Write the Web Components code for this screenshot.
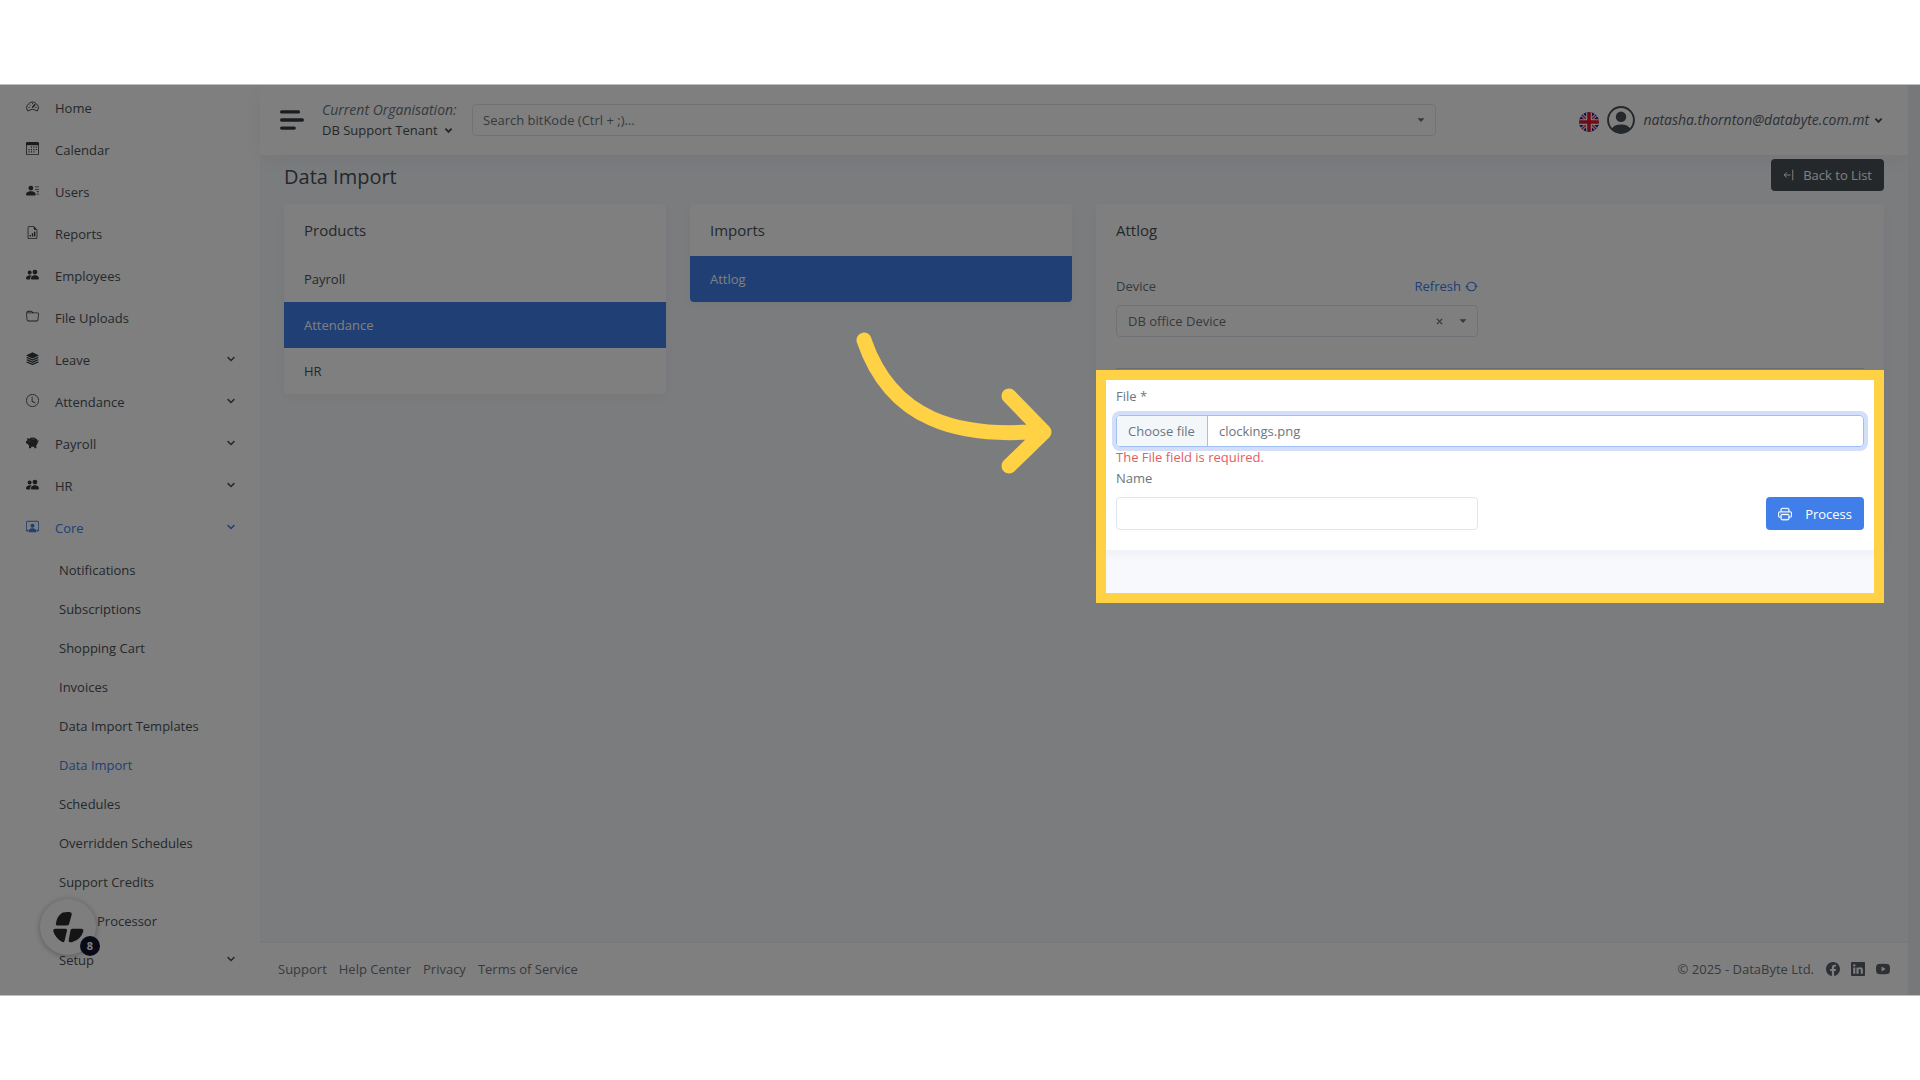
<!DOCTYPE html>
<html lang="en">
<head>
<meta charset="utf-8">
<title>Data Import</title>
<style>
  html, body { margin: 0; background: #fff; }
  body {
    font: 13px/20px "Open Sans", "Noto Sans", sans-serif;
    color: #495057;
    --blue: #407fea;
    --muted: #6c757d;
    --line: #dfe6ee;
    --canvas: #f7f9fd;
  }
</style>
</head>
<body>
<db-app></db-app>
<script>
const RESET = `
  *, *::before, *::after { box-sizing: border-box; }
  ul { list-style: none; margin: 0; padding: 0; }
  h1, h2, p { margin: 0; font-weight: 400; }
  a { color: inherit; text-decoration: none; }
  button, input, select { font: inherit; color: inherit; }
  button { background: none; border: 0; padding: 0; cursor: pointer; }
`;

const define = (name, css, html) => {
  customElements.define(name, class extends HTMLElement {
    connectedCallback() {
      if (this.shadowRoot) return;
      const root = this.attachShadow({ mode: 'open' });
      const body = typeof html === 'function' ? html(this) : html;
      root.innerHTML = `<style>${RESET}${css}</style>${body}`;
    }
  });
};

const ICONS = {
  dash: `<g fill="none" stroke="currentColor" stroke-width="1.1"><path d="M2.2 13.6A7 7 0 1 1 13.8 13.6Q11 11.6 8 11.6T2.2 13.6Z"/><path d="M7.6 9.6 11.4 5.2" stroke-width="1.7"/><path d="M8 3.6v1.6M3.2 9h1.6M11.4 9h1.6M4.6 5.6l1 1"/></g>`,
  calendar: `<path d="M1.5 0h13A1.5 1.5 0 0 1 16 1.500v13a1.500 1.500 0 0 1-1.500 1.500h-13A1.500 1.500 0 0 1 0 14.500v-13A1.500 1.500 0 0 1 1.500 0ZM1 4v10.500a.5.5 0 0 0 .5.5h13a.5.5 0 0 0 .5-.5V4Z" fill-rule="evenodd"/><path d="M6 5.500h1.400v1.500H6zM9 5.500h1.400v1.500H9zM12 5.500h1.400v1.500H12zM3 8.500h1.400V10H3zM6 8.500h1.400V10H6zM9 8.500h1.400V10H9zM12 8.500h1.400V10H12zM3 11.500h1.400V13H3zM6 11.500h1.400V13H6zM9 11.500h1.400V13H9z"/>`,
  users: `<path d="M6 8a3 3 0 1 0 0-6 3 3 0 0 0 0 6m-5 6s-1 0-1-1 1-4 6-4 6 3 6 4-1 1-1 1zM11 3.5a.5.5 0 0 1 .5-.5h4a.5.5 0 0 1 0 1h-4a.5.5 0 0 1-.5-.5m.5 2.5a.5.5 0 0 0 0 1h4a.5.5 0 0 0 0-1zm2 3a.5.5 0 0 0 0 1h2a.5.5 0 0 0 0-1zm0 3a.5.5 0 0 0 0 1h2a.5.5 0 0 0 0-1z"/>`,
  report: `<path d="M9.800 13V7h1.700v6zM7.200 13V9h1.600v4zM4.500 13v-2h1.600v2z"/><path d="M14 14V4.500L9.500 0H4a2 2 0 0 0-2 2v12a2 2 0 0 0 2 2h8a2 2 0 0 0 2-2M9.500 3A1.500 1.500 0 0 0 11 4.500h2V14a1 1 0 0 1-1 1H4a1 1 0 0 1-1-1V2a1 1 0 0 1 1-1h5.500z"/>`,
  people: `<path d="M7 14s-1 0-1-1 1-4 5-4 5 3 5 4-1 1-1 1zm4-6a3 3 0 1 0 0-6 3 3 0 0 0 0 6m-5.784 6A2.24 2.24 0 0 1 5 13c0-1.355.68-2.75 1.936-3.72A6.3 6.3 0 0 0 5 9c-4 0-5 3-5 4s1 1 1 1zM4.5 8a2.5 2.5 0 1 0 0-5 2.5 2.5 0 0 0 0 5"/>`,
  folder: `<path d="M.54 3.87.5 3a2 2 0 0 1 2-2h3.672a2 2 0 0 1 1.414.586l.828.828A2 2 0 0 0 9.828 3h3.982a2 2 0 0 1 1.992 2.181l-.637 7A2 2 0 0 1 13.174 14H2.826a2 2 0 0 1-1.991-1.819l-.637-7a2 2 0 0 1 .342-1.310zM2.190 4a1 1 0 0 0-.996 1.090l.637 7a1 1 0 0 0 .995.910h10.348a1 1 0 0 0 .995-.910l.637-7A1 1 0 0 0 13.810 4zm4.690-1.707A1 1 0 0 0 6.172 2H2.500a1 1 0 0 0-1 .981l.006.139q.323-.119.684-.120h5.396z"/>`,
  stack: `<path d="M8 .4 16 4.200 8 8 0 4.200Z"/><path d="M1.900 6 8 8.900 14.100 6 16 7 8 10.800 0 7ZM1.900 8.800 8 11.700 14.100 8.800 16 9.800 8 13.500 0 9.800ZM1.900 11.600 8 14.400 14.100 11.600 16 12.500 8 16.200 0 12.500Z"/>`,
  clock: `<path d="M8 3.500a.5.5 0 0 0-1 0V9a.5.5 0 0 0 .252.434l3.500 2a.5.5 0 0 0 .496-.868L8 8.710z"/><circle cx="8" cy="8" r="7.500" fill="none" stroke="currentColor"/>`,
  piggy: `<path d="M1.200 3.300C1.600 2.700 2.400 2.800 3 3.200L3.900 3.700C5 2.500 6.600 1.900 8.300 1.900c3 0 5.500 1.700 6.100 4.300.5-.2.800-.6.700-1.200.9.4 1 1.600-.5 2.100.1 1.700-.8 3.300-2.100 4.400l.4 2.900a.5.5 0 0 1-.5.6h-1.900l-.5-1.900q-1.700.3-3.400 0L6.100 15H4.200a.5.5 0 0 1-.5-.5l.1-2.700C2.900 11.100 2.300 10.200 2 9.500L.8 9.200A.9.9 0 0 1 0 8.300V6.700c0-.5.4-.8.8-.9L1.900 5.400Z"/><path d="M6.800 4q2-.6 3.800.200" fill="none" stroke="#999" stroke-width=".8"/><circle cx="4.500" cy="6.300" r=".7" fill="#999"/>`,
  work: `<path d="M4 15s-1 0-1-1 1-4 5-4 5 3 5 4-1 1-1 1zm4-5.500a2.500 2.500 0 1 0 0-5 2.500 2.500 0 0 0 0 5"/><path d="M2 1a2 2 0 0 0-2 2v9.500A1.500 1.500 0 0 0 1.500 14h.653a5.400 5.400 0 0 1 1.066-2H1V3a1 1 0 0 1 1-1h12a1 1 0 0 1 1 1v9h-2.219c.554.654.89 1.373 1.066 2h.653a1.500 1.500 0 0 0 1.500-1.500V3a2 2 0 0 0-2-2z"/>`,
  chevron: `<path d="M3.500 5.500 8 10l4.500-4.500" fill="none" stroke="currentColor" stroke-width="1.900"/>`,
  bold: `<path d="M2.500 4.500 8 10.500l5.500-6" fill="none" stroke="currentColor" stroke-width="3.400"/>`,
  caret: `<path d="M1 4.500h14L8 12Z"/>`,
  cross: `<path d="m2 2 12 12m0-12-12 12" fill="none" stroke="currentColor" stroke-width="3.200"/>`,
  back: `<path d="M13 1v14M10 8H1.500M5 4.500 1.500 8 5 11.500" fill="none" stroke="currentColor" stroke-width="1.300"/>`,
  printer: `<path d="M2.500 8a.5.5 0 1 0 0-1 .5.5 0 0 0 0 1"/><path d="M5 1a2 2 0 0 0-2 2v2H2a2 2 0 0 0-2 2v3a2 2 0 0 0 2 2h1v1a2 2 0 0 0 2 2h6a2 2 0 0 0 2-2v-1h1a2 2 0 0 0 2-2V7a2 2 0 0 0-2-2h-1V3a2 2 0 0 0-2-2zM4 3a1 1 0 0 1 1-1h6a1 1 0 0 1 1 1v2H4zm1 5a2 2 0 0 0-2 2v1H2a1 1 0 0 1-1-1V7a1 1 0 0 1 1-1h12a1 1 0 0 1 1 1v3a1 1 0 0 1-1 1h-1v-1a2 2 0 0 0-2-2zm7 2v3a1 1 0 0 1-1 1H5a1 1 0 0 1-1-1v-3a1 1 0 0 1 1-1h6a1 1 0 0 1 1 1" stroke="currentColor" stroke-width=".4"/>`,
  refresh: `<path d="M11.534 7h3.932a.25.25 0 0 1 .192.410l-1.966 2.360a.25.25 0 0 1-.384 0l-1.966-2.360a.25.25 0 0 1 .192-.410m-11 2h3.932a.25.25 0 0 0 .192-.410L2.692 6.230a.25.25 0 0 0-.384 0L.342 8.590A.25.25 0 0 0 .534 9"/><path d="M2.600 5.800A6.200 6.200 0 0 1 13.800 7M13.400 10.200A6.200 6.200 0 0 1 2.200 9" fill="none" stroke="currentColor" stroke-width="1.300"/>`,
  menu: `<g fill="none" stroke="currentColor" stroke-width="2.200" stroke-linecap="round"><path d="M1.100 2.600h11.200M1.100 8h13.800M1.100 13.400h8.400"/></g>`,
  facebook: `<path d="M16 8.049c0-4.446-3.582-8.050-8-8.050C3.580 0-.002 3.603-.002 8.050c0 4.017 2.926 7.347 6.750 7.951v-5.625h-2.030V8.050H6.750V6.275c0-2.017 1.195-3.131 3.022-3.131.876 0 1.791.157 1.791.157v1.980h-1.009c-.993 0-1.303.621-1.303 1.258v1.510h2.218l-.354 2.326H9.250V16c3.824-.604 6.750-3.934 6.750-7.951"/>`,
  linkedin: `<path d="M0 1.146C0 .513.526 0 1.175 0h13.650C15.474 0 16 .513 16 1.146v13.708c0 .633-.526 1.146-1.175 1.146H1.175C.526 16 0 15.487 0 14.854zm4.943 12.248V6.169H2.542v7.225zm-1.200-8.212c.837 0 1.358-.554 1.358-1.248-.015-.709-.520-1.248-1.342-1.248S2.400 3.226 2.400 3.934c0 .694.521 1.248 1.327 1.248zm4.908 8.212V9.359c0-.216.016-.432.080-.586.173-.431.568-.878 1.232-.878.869 0 1.216.662 1.216 1.634v3.865h2.401V9.250c0-2.220-1.184-3.252-2.764-3.252-1.274 0-1.845.7-2.165 1.193v.025h-.016l.016-.025V6.169h-2.400c.030.678 0 7.225 0 7.225z"/>`,
  youtube: `<path fill-rule="evenodd" d="M3 2.300Q8 1.800 13 2.300 15.300 2.500 15.700 4.700 16.200 8 15.700 11.300 15.300 13.500 13 13.700 8 14.200 3 13.700.7 13.500.3 11.300-.2 8 .3 4.700.7 2.500 3 2.300ZM6.400 5.200v5.600L11 8Z"/>`,
  avatar: `<circle cx="8" cy="8" r="7.400" fill="none" stroke="currentColor" stroke-width="1.100"/><circle cx="8" cy="6.200" r="3"/><path d="M2.700 13Q4 10.500 8 10.500t5.300 2.500A7.300 7.300 0 0 1 2.700 13Z"/>`,
  flag: `<clipPath id="c"><circle cx="8" cy="8" r="8"/></clipPath><g clip-path="url(#c)"><path fill="#12239a" d="M0 0h16v16H0z"/><path d="m0 0 16 16M16 0 0 16" stroke="#fff" stroke-width="2.600"/><path d="m0 0 16 16M16 0 0 16" stroke="#e0142f" stroke-width="1"/><path d="M8 0v16M0 8h16" stroke="#fff" stroke-width="4.600"/><path d="M8 0v16M0 8h16" stroke="#e0142f" stroke-width="2.800"/></g>`,
  brand: `<path d="M5 .3Q8-.2 9 .1 9.900.4 9.600 1.500L8.300 6.200Q8 7 7 7H2.300Q1.300 7 1.500 6 2 2 5 .3ZM1.200 8.700H6.400Q7.500 8.700 7.200 9.700L6 14.800Q5.600 16 4.600 15.400 1 13 .2 10-.1 8.700 1.200 8.700ZM10 8.700H14.600Q16 8.700 15.600 10 14.500 14 10 15.500 7.900 16 8.100 14.600L9 9.600Q9.200 8.700 10 8.700Z"/>`
};

define('db-icon', `
  :host { display: inline-flex; flex: none; width: 13px; height: 13px; }
  svg { display: block; width: 100%; height: 100%; fill: currentColor; }
`, host => `<svg viewBox="0 0 16 16" aria-hidden="true">${ICONS[host.getAttribute('name')]}</svg>`);

define('nav-item', `
  :host { display: block; }
  a { display: flex; align-items: center; height: 42px; padding: 0 26px; }
  .label { flex: 1; padding-left: 16px; }
  :host([sub]) a { height: 39px; padding-left: 59px; }
  :host([sub]) .label { padding-left: 0; }
  :host([inset]) .label { padding-left: 38px; }
  :host([active]) a { color: var(--blue); }
  .icon { color: #343a40; margin-bottom: 3px; }
  :host([active]) .icon { color: var(--blue); }
  .arrow { width: 12px; height: 12px; margin: 0 -3px 2px 0; }
`, host => `<a href="#">${host.hasAttribute('icon') ? `<db-icon class="icon" name="${host.getAttribute('icon')}"></db-icon>` : ''}
  <span class="label"><slot></slot></span>
  ${host.hasAttribute('more') ? '<db-icon class="arrow" name="chevron"></db-icon>' : ''}</a>`);

define('app-sidebar', `
  :host { display: block; width: 260px; flex: none; background: #fff; padding-top: 2px; }
  .sub { padding-top: 1px; }
`, `<nav aria-label="Main">
  <nav-item icon="dash">Home</nav-item>
  <nav-item icon="calendar">Calendar</nav-item>
  <nav-item icon="users">Users</nav-item>
  <nav-item icon="report">Reports</nav-item>
  <nav-item icon="people">Employees</nav-item>
  <nav-item icon="folder">File Uploads</nav-item>
  <nav-item icon="stack" more>Leave</nav-item>
  <nav-item icon="clock" more>Attendance</nav-item>
  <nav-item icon="piggy" more>Payroll</nav-item>
  <nav-item icon="people" more>HR</nav-item>
  <nav-item icon="work" more active>Core</nav-item>
  <div class="sub">
    <nav-item sub>Notifications</nav-item>
    <nav-item sub>Subscriptions</nav-item>
    <nav-item sub>Shopping Cart</nav-item>
    <nav-item sub>Invoices</nav-item>
    <nav-item sub>Data Import Templates</nav-item>
    <nav-item sub active>Data Import</nav-item>
    <nav-item sub>Schedules</nav-item>
    <nav-item sub>Overridden Schedules</nav-item>
    <nav-item sub>Support Credits</nav-item>
    <nav-item sub inset>Processor</nav-item>
    <nav-item sub more>Setup</nav-item>
  </div>
</nav>`);

define('app-topbar', `
  :host { display: flex; align-items: center; height: 70px; padding: 0 25px 0 20px; background: #fff;
    position: relative; box-shadow: 0 4px 24px rgba(18, 38, 63, .06); }
  .menu { display: flex; }
  .menu db-icon { width: 24px; height: 24px; color: #343a40; }
  .org { width: 150px; margin-left: 18px; line-height: 21px; white-space: nowrap; }
  em { font-size: 14px; color: var(--muted); }
  .org em { display: block; }
  .org button { display: flex; align-items: center; gap: 6px; }
  .tick { width: 9px; height: 9px; }
  .search { flex: 1; display: grid; align-items: center; }
  .search > * { grid-area: 1 / 1; }
  select { appearance: none; width: 100%; height: 32px; padding: 0 10px; border: 1px solid var(--line);
    border-radius: 4px; background: #fff; color: var(--muted); }
  .search db-icon { justify-self: end; margin-right: 11px; width: 8px; height: 8px; color: var(--muted); pointer-events: none; }
  .user { width: 447px; display: flex; align-items: center; justify-content: flex-end; }
  .user button { display: flex; align-items: center; }
  .flag { width: 20px; height: 20px; margin: 4px 8px 0 0; }
  .face { width: 28px; height: 28px; margin-right: 8px; }
  .user em { margin-right: 5px; color: #5a626a; }
`, `<button class="menu" aria-label="Toggle menu"><db-icon name="menu"></db-icon></button>
  <div class="org"><em>Current Organisation:</em><button>DB Support Tenant <db-icon class="tick" name="bold"></db-icon></button></div>
  <div class="search"><select aria-label="Search"><option>Search bitKode (Ctrl + ;)...</option></select><db-icon name="caret"></db-icon></div>
  <div class="user">
    <button aria-label="Language"><db-icon class="flag" name="flag"></db-icon></button>
    <button><db-icon class="face" name="avatar"></db-icon><em>natasha.thornton@databyte.com.mt</em><db-icon class="tick" name="bold"></db-icon></button>
  </div>`);

define('db-card', `
  :host { display: block; background: #fff; border-radius: 4px; box-shadow: 0 3px 12px rgba(18, 38, 63, .05); }
  h2 { padding: 16px 20px; font-size: 15px; line-height: 20px; }
`, host => `<h2>${host.getAttribute('heading')}</h2><slot></slot>`);

define('pick-list', `
  :host { display: block; border-radius: 0 0 4px 4px; overflow: hidden; }
  a { display: block; padding: 13px 20px; }
  a[aria-current] { background: var(--blue); color: #fff; }
`, host => `<ul>${host.getAttribute('items').split(',').map(t =>
  `<li><a href="#"${t === host.getAttribute('selected') ? ' aria-current="true"' : ''}>${t}</a></li>`).join('')}</ul>`);

define('guide-spotlight', `
  :host { position: absolute; z-index: 10; pointer-events: none; border: 10px solid #ffd145;
    box-shadow: 0 0 0 3000px rgba(0, 0, 0, .5); }
  svg { position: absolute; right: 100%; top: -50px; margin-right: 51px; width: 200px; height: 150px; fill: none; stroke: #ffd145;
    stroke-width: 15; stroke-linecap: round; stroke-linejoin: round; }
`, `<svg viewBox="0 0 200 150" aria-hidden="true"><path d="M9 10C36 90 103 109 188 101M154 66 189 102 154 136"/></svg>`);

define('import-form', `
  :host { display: block; padding: 0 20px 20px; color: var(--muted); }
  .grid { display: grid; grid-template-columns: 1fr 1fr; column-gap: 24px; }
  .top { display: flex; justify-content: space-between; padding: 20px 0 9px; }
  .top a { display: flex; align-items: center; gap: 4px; color: var(--blue); }
  .combo { display: grid; align-items: center; grid-template-columns: 1fr auto auto; }
  select, .text { height: 32px; width: 100%; border: 1px solid var(--line); border-radius: 4px; background: #fff; padding: 0 11px; }
  select { appearance: none; grid-area: 1 / 1 / 2 / 4; }
  .clear { grid-area: 1 / 2; margin-right: 16px; display: flex; position: relative; }
  .clear db-icon { width: 7px; height: 7px; }
  .caret { grid-area: 1 / 3; margin-right: 11px; width: 8px; height: 8px; pointer-events: none; position: relative; }
  hr { margin: 31px 0 17px; border: 0; border-top: 1px solid #d5dce4; }
  label { display: block; }
  .file { position: relative; display: flex; height: 32px; margin-top: 9px; border: 1px solid #9fbff4;
    border-radius: 4px; box-shadow: 0 0 0 4px #d3dffa; line-height: 30px; }
  .file label { padding: 0 12px 0 11px; background: #f3f7fa; border-right: 1px solid #9fbff4; border-radius: 3px 0 0 3px; }
  .file output { padding-left: 11px; }
  .file input { position: absolute; inset: 0; width: 100%; opacity: 0; }
  .error { color: #e2605f; line-height: 21px; }
  .text { height: 33px; margin-top: 9px; }
  .go { align-self: end; justify-self: end; display: flex; align-items: center; height: 33px; gap: 13px; padding: 0 12px;
    border-radius: 4px; background: var(--blue); color: #fff; font-weight: 500; }
  .go db-icon { width: 14px; height: 14px; }
`, `<form>
  <div class="grid"><div>
    <div class="top"><label for="device">Device</label><a href="#">Refresh <db-icon name="refresh"></db-icon></a></div>
    <div class="combo"><select id="device"><option>DB office Device</option></select>
      <button type="button" class="clear" aria-label="Clear"><db-icon name="cross"></db-icon></button><db-icon class="caret" name="caret"></db-icon></div>
  </div></div>
  <hr>
  <label for="file">File *</label>
  <div class="file"><label for="file">Choose file</label><output>clockings.png</output><input id="file" type="file"></div>
  <p class="error">The File field is required.</p>
  <div class="grid">
    <div><label for="name">Name</label><input id="name" class="text" type="text"></div>
    <button type="button" class="go"><db-icon name="printer"></db-icon>Process</button>
  </div>
</form>`);

define('app-content', `
  :host { display: block; flex: 1; padding: 4px 24px 0; }
  header { display: flex; justify-content: space-between; align-items: flex-start; padding-bottom: 9px; }
  h1 { font-size: 20px; line-height: 36px; }
  .back { display: flex; align-items: center; gap: 8px; height: 32px; padding: 0 12px; border-radius: 4px; background: #495057; color: #fff;
    font-weight: 500; position: relative; }
  .back db-icon { width: 12px; height: 12px; }
  .cols { display: grid; grid-template-columns: repeat(4, 1fr); gap: 24px; align-items: start; }
  .wide { grid-column: span 2; position: relative; }
  guide-spotlight { inset: 166px 0 -53px; }
`, `<header><h1>Data Import</h1><button class="back"><db-icon name="back"></db-icon>Back to List</button></header>
  <div class="cols">
    <db-card heading="Products"><pick-list items="Payroll,Attendance,HR" selected="Attendance"></pick-list></db-card>
    <db-card heading="Imports"><pick-list items="Attlog" selected="Attlog"></pick-list></db-card>
    <db-card class="wide" heading="Attlog"><import-form></import-form><guide-spotlight></guide-spotlight></db-card>
  </div>`);

define('app-footer', `
  :host { display: flex; align-items: center; height: 54px; padding: 0 18px; border-top: 2px solid #eff2f7;
    background: #fff; color: var(--muted); }
  nav { display: flex; flex: 1; gap: 12px; }
  .social { display: flex; gap: 11px; margin-left: 12px; color: #5a626a; }
  .social a { display: flex; }
  .social db-icon { width: 14px; height: 14px; }
`, `<nav aria-label="Footer"><a href="#">Support</a><a href="#">Help Center</a><a href="#">Privacy</a><a href="#">Terms of Service</a></nav>
  <span>© 2025 - DataByte Ltd.</span>
  <div class="social"><a href="#" aria-label="Facebook"><db-icon name="facebook"></db-icon></a><a href="#" aria-label="LinkedIn"><db-icon name="linkedin"></db-icon></a><a href="#" aria-label="YouTube"><db-icon name="youtube"></db-icon></a></div>`);

define('help-bubble', `
  :host { position: absolute; left: 40px; bottom: 40px; }
  button { display: grid; place-items: center; width: 56px; height: 56px; border-radius: 50%; background: #fafdfb;
    box-shadow: 0 1px 6px rgba(0, 0, 0, .3); color: #2b2b2d; }
  db-icon { width: 31px; height: 31px; }
  span { position: absolute; left: 40px; top: 37px; width: 20px; height: 20px; padding: 4px 0; border-radius: 50%; background: #10162e;
    color: #fff; font-size: 11px; line-height: 12px; font-weight: 700; text-align: center; }
`, `<button aria-label="Open help"><db-icon name="brand"></db-icon><span>8</span></button>`);

define('db-app', `
  :host { display: flex; min-height: 100vh; padding: 84px 0; box-sizing: border-box; }
  .stage { flex: 1; display: flex; position: relative; overflow: hidden; border: solid #c0c0c0; border-width: 1px 0; }
  main { flex: 1; display: flex; flex-direction: column; background: var(--canvas); }
  .track { width: 12px; flex: none; background: #eff1f4; position: relative; }
`, `<div class="stage">
  <app-sidebar></app-sidebar>
  <main><app-topbar></app-topbar><app-content></app-content><app-footer></app-footer></main>
  <div class="track"></div>
  <help-bubble></help-bubble>
</div>`);
</script>
</body>
</html>
